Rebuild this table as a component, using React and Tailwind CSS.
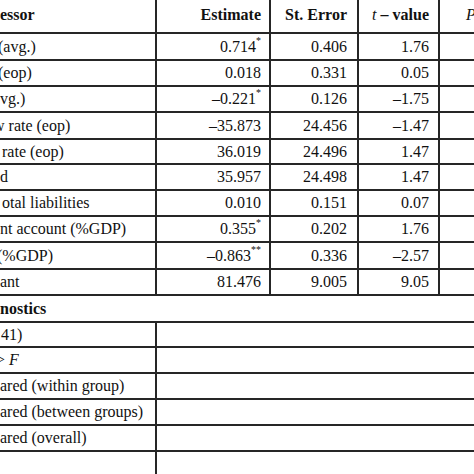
const rows = [
  { label: "(avg.)", shift: "-ml-[2px]", est: "0.714", star: "*", se: "0.406", t: "1.76", h: "h-[27px]" },
  { label: "(eop)", shift: "-ml-[2px]", est: "0.018", star: "", se: "0.331", t: "0.05", h: "h-[26px]" },
  { label: "vg.)", shift: "", est: "\u20130.221", star: "*", se: "0.126", t: "\u20131.75", h: "h-[26px]" },
  { label: "w rate (eop)", shift: "-ml-[7px]", est: "\u201335.873", star: "", se: "24.456", t: "\u20131.47", h: "h-[27px]" },
  { label: "rate (eop)", shift: "ml-[2px]", est: "36.019", star: "", se: "24.496", t: "1.47", h: "h-[25px]" },
  { label: "d", shift: "", est: "35.957", star: "", se: "24.498", t: "1.47", h: "h-[26px]" },
  { label: "otal liabilities", shift: "ml-[2px]", est: "0.010", star: "", se: "0.151", t: "0.07", h: "h-[26px]" },
  { label: "nt account (%GDP)", shift: "", est: "0.355", star: "*", se: "0.202", t: "1.76", h: "h-[26px]" },
  { label: "(%GDP)", shift: "-ml-[3px]", est: "\u20130.863", star: "**", se: "0.336", t: "\u20132.57", h: "h-[27px]" },
  { label: "ant", shift: "", est: "81.476", star: "", se: "9.005", t: "9.05", h: "h-[26px]" },
];

const diag = [
  { label: "41)", shift: "ml-[1px]", h: "h-[25px]" },
  { label: <>&gt; <i>F</i></>, shift: "-ml-[4px]", h: "h-[26px]" },
  { label: "ared (within group)", shift: "", h: "h-[26px]" },
  { label: "ared (between groups)", shift: "", h: "h-[26px]" },
  { label: "ared (overall)", shift: "", h: "h-[26px]" },
];

const line = "border-[#262626]";

export default function App() {
  return (
    <div
      className="w-[474px] h-[474px] overflow-hidden bg-white text-[#111] text-[16px] leading-none"
      style={{ fontFamily: '"Liberation Serif", "Times New Roman", serif' }}
    >
      {/* header */}
      <div className={`flex h-[34px] border-b-2 ${line} font-bold`}>
        <div className={`w-[157px] shrink-0 border-r-2 ${line} flex items-center pb-[2px] overflow-hidden whitespace-nowrap`}>
          essor
        </div>
        <div className={`w-[114px] shrink-0 border-r-2 ${line} flex items-center justify-end pr-[8px] pb-[2px]`}>
          Estimate
        </div>
        <div className={`w-[88px] shrink-0 border-r-2 ${line} flex items-center justify-end pr-[10px] pb-[2px]`}>
          St. Error
        </div>
        <div className={`w-[81px] shrink-0 border-r-2 ${line} flex items-center justify-end pr-[9px] pb-[2px] whitespace-nowrap`}>
          <i className="font-normal">t</i>&nbsp;– value
        </div>
        <div className="flex-1 flex items-center pl-[26px] pb-[2px] whitespace-nowrap">
          <i className="font-normal">P</i>
        </div>
      </div>

      {rows.map((r, i) => (
        <div key={i} className={`flex ${r.h} border-b-2 ${line}`}>
          <div className={`w-[157px] shrink-0 border-r-2 ${line} flex items-center overflow-hidden whitespace-nowrap`}>
            <span className={r.shift}>{r.label}</span>
          </div>
          <div className={`w-[114px] shrink-0 border-r-2 ${line} flex items-center justify-end pr-[8px]`}>
            {r.est}
            {r.star && <sup className="text-[10px] top-[-0.6em]">{r.star}</sup>}
          </div>
          <div className={`w-[88px] shrink-0 border-r-2 ${line} flex items-center justify-end pr-[10px]`}>
            {r.se}
          </div>
          <div className={`w-[81px] shrink-0 border-r-2 ${line} flex items-center justify-end pr-[9px]`}>
            {r.t}
          </div>
          <div className="flex-1" />
        </div>
      ))}

      {/* diagnostics heading */}
      <div className={`flex h-[27px] border-b-2 ${line} items-center font-bold whitespace-nowrap`}>
        nostics
      </div>

      {diag.map((d, i) => (
        <div key={i} className={`flex ${d.h} border-b-2 ${line}`}>
          <div className={`w-[157px] shrink-0 border-r-2 ${line} flex items-center overflow-hidden whitespace-nowrap`}>
            <span className={d.shift}>{d.label}</span>
          </div>
          <div className="flex-1" />
        </div>
      ))}

      <div className="flex h-[30px]">
        <div className={`w-[157px] shrink-0 border-r-2 ${line}`} />
        <div className="flex-1" />
      </div>
    </div>
  );
}
